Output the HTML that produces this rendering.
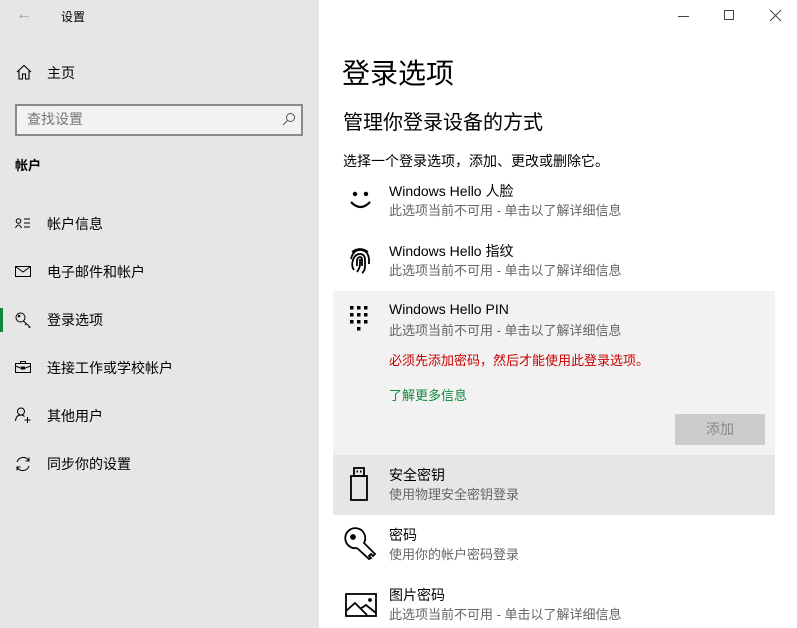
<!DOCTYPE html>
<html><head><meta charset="utf-8"><style>
*{margin:0;padding:0;box-sizing:border-box}
body{width:797px;height:628px;overflow:hidden;background:#fff;font-family:"Liberation Sans","Noto Sans CJK SC",sans-serif;color:#000;position:relative}
.a{position:absolute;white-space:nowrap}
#left{position:absolute;left:0;top:0;width:319px;height:628px;background:#e6e6e6}
.nav{font-size:14px}
.t{font-size:14px;color:#000}
.s{font-size:13px;color:#666}
svg{position:absolute;overflow:visible}
</style></head><body>
<div id="left">
<div class="a" style="left:16px;top:6px;font-size:16px;color:#999">←</div>
<div class="a" style="left:61px;top:8px;font-size:12px">设置</div>
<svg style="left:16px;top:64px" width="16" height="16" viewBox="0 0 16 16" fill="none" stroke="#000" stroke-width="1.1"><path d="M1 8 L8 1.5 L15 8 M3 6.5 V15 H6.5 V10 H9.5 V15 H13 V6.5"/></svg>
<div class="a nav" style="left:47px;top:63px">主页</div>
<div class="a" style="left:15px;top:104px;width:288px;height:32px;border:2px solid #8a8a8a;background:#f2f2f2"></div>
<div class="a" style="left:27px;top:109px;font-size:14px;color:#777">查找设置</div>
<svg style="left:282px;top:112px" width="14" height="14" viewBox="0 0 14 14" fill="none" stroke="#555" stroke-width="1"><circle cx="8.5" cy="5.5" r="4"/><path d="M5.5 8.5 L1 13"/></svg>
<div class="a" style="left:15px;top:155px;font-size:13px;font-weight:bold">帐户</div>
<svg style="left:15px;top:217px" width="16" height="14" viewBox="0 0 16 14" fill="none" stroke="#000" stroke-width="1"><circle cx="3.5" cy="4" r="2.3"/><path d="M0.5 11 Q3.5 5 6.5 11 M9 2H15 M9 6H15 M9 10H15"/></svg>
<div class="a nav" style="left:47px;top:214px">帐户信息</div>
<svg style="left:15px;top:266px" width="16" height="12" viewBox="0 0 16 12" fill="none" stroke="#000" stroke-width="1"><rect x="0.5" y="0.5" width="15" height="10"/><path d="M0.5 0.5 L8 6 L15.5 0.5"/></svg>
<div class="a nav" style="left:47px;top:262px">电子邮件和帐户</div>
<div class="a" style="left:0;top:308px;width:3px;height:24px;background:#10893e"></div>
<svg style="left:15px;top:312px" width="16" height="16" viewBox="0 0 16 16" fill="none" stroke="#000" stroke-width="1"><circle cx="5.5" cy="5.5" r="4.5"/><circle cx="4" cy="4" r="0.8" fill="#000"/><path d="M8.5 9 L15 15 L13.5 16 M11 12 L10 13"/></svg>
<div class="a nav" style="left:47px;top:310px">登录选项</div>
<svg style="left:15px;top:361px" width="16" height="12" viewBox="0 0 16 12" fill="none" stroke="#000" stroke-width="1"><rect x="0.5" y="2.5" width="15" height="9"/><path d="M5.5 2.5V0.5H10.5V2.5 M0.5 5 L8 8 L15.5 5"/><rect x="6.5" y="6" width="3" height="2" fill="#000"/></svg>
<div class="a nav" style="left:47px;top:358px">连接工作或学校帐户</div>
<svg style="left:15px;top:407px" width="16" height="16" viewBox="0 0 16 16" fill="none" stroke="#000" stroke-width="1"><circle cx="6" cy="4.5" r="3.5"/><path d="M0.5 14 Q1 8 6 8 Q8 8 9.5 9.5 M12.5 10V16 M9.5 13H15.5"/></svg>
<div class="a nav" style="left:47px;top:406px">其他用户</div>
<svg style="left:15px;top:456px" width="16" height="16" viewBox="0 0 16 16" fill="none" stroke="#000" stroke-width="1"><path d="M2 6 A6.5 6.5 0 0 1 14 5 M14 1.5V5H10.5 M14 10 A6.5 6.5 0 0 1 2 11 M2 14.5V11H5.5"/></svg>
<div class="a nav" style="left:47px;top:454px">同步你的设置</div>
</div>

<div class="a" style="left:678px;top:16px;width:11px;height:1px;background:#444"></div>
<div class="a" style="left:724px;top:10px;width:10px;height:10px;border:1px solid #444"></div>
<svg style="left:770px;top:10px" width="11" height="11" viewBox="0 0 11 11" stroke="#444" stroke-width="1"><path d="M0 0L11 11M11 0L0 11"/></svg>

<div class="a" style="left:342px;top:52px;font-size:28px">登录选项</div>
<div class="a" style="left:343px;top:106px;font-size:20px">管理你登录设备的方式</div>
<div class="a" style="left:343px;top:151px;font-size:14px">选择一个登录选项，添加、更改或删除它。</div>

<svg style="left:349px;top:190px" width="24" height="20" viewBox="0 0 24 20"><circle cx="6" cy="4" r="2.2"/><circle cx="17" cy="4" r="2.2"/><path d="M2 12 Q11.5 22 21 12" fill="none" stroke="#000" stroke-width="2.2"/></svg>
<div class="a t" style="left:389px;top:181px">Windows Hello 人脸</div>
<div class="a s" style="left:389px;top:200px">此选项当前不可用 - 单击以了解详细信息</div>

<svg style="left:349px;top:246px" width="22" height="28" viewBox="0 0 22 28" fill="none" stroke="#000" stroke-width="1.8"><path d="M3 6 Q11 0 19 6 M2 13 Q4 4 11 4 Q19 4 20 13 V18 M5 24 Q2 20 4 14 Q6 8 11 8 Q16 8 16 14 V20 Q16 25 13 27 M8 26 Q11 22 11 18 V13 M8 20 V14 Q9 11 11 11 Q13 11 13 14 V20"/></svg>
<div class="a t" style="left:389px;top:241px">Windows Hello 指纹</div>
<div class="a s" style="left:389px;top:260px">此选项当前不可用 - 单击以了解详细信息</div>

<div class="a" style="left:333px;top:291px;width:442px;height:164px;background:#f2f2f2"></div>
<svg style="left:350px;top:306px" width="22" height="26" viewBox="0 0 22 26" fill="#000"><rect x="0" y="0" width="3.5" height="3.5"/><rect x="7" y="0" width="3.5" height="3.5"/><rect x="14" y="0" width="3.5" height="3.5"/><rect x="0" y="7" width="3.5" height="3.5"/><rect x="7" y="7" width="3.5" height="3.5"/><rect x="14" y="7" width="3.5" height="3.5"/><rect x="0" y="14" width="3.5" height="3.5"/><rect x="7" y="14" width="3.5" height="3.5"/><rect x="14" y="14" width="3.5" height="3.5"/><rect x="7" y="21" width="3.5" height="3.5"/></svg>
<div class="a t" style="left:389px;top:301px">Windows Hello PIN</div>
<div class="a s" style="left:389px;top:320px">此选项当前不可用 - 单击以了解详细信息</div>
<div class="a" style="left:389px;top:350px;font-size:13px;color:#c00">必须先添加密码，然后才能使用此登录选项。</div>
<div class="a" style="left:389px;top:385px;font-size:13px;color:#10893e">了解更多信息</div>
<div class="a" style="left:675px;top:414px;width:90px;height:31px;background:#ccc;color:#888;font-size:14px;text-align:center;line-height:31px">添加</div>

<div class="a" style="left:333px;top:455px;width:442px;height:60px;background:#e6e6e6"></div>
<svg style="left:350px;top:467px" width="18" height="34" viewBox="0 0 18 34" fill="none" stroke="#000" stroke-width="1.8"><rect x="4" y="1" width="10" height="8"/><rect x="1" y="9" width="16" height="24"/><rect x="6.5" y="3.5" width="1.5" height="2" fill="#000" stroke="none"/><rect x="10" y="3.5" width="1.5" height="2" fill="#000" stroke="none"/></svg>
<div class="a t" style="left:389px;top:465px">安全密钥</div>
<div class="a s" style="left:389px;top:484px">使用物理安全密钥登录</div>

<svg style="left:345px;top:528px" width="34" height="32" viewBox="0 0 34 32" fill="none" stroke="#000" stroke-width="1.8"><path d="M12 20 A10 10 0 1 1 19 15 L30 26 L28 28 L26 26 L24 28 L26 30 L24 31 L12 20"/><circle cx="8" cy="9" r="2" fill="#000"/></svg>
<div class="a t" style="left:389px;top:525px">密码</div>
<div class="a s" style="left:389px;top:544px">使用你的帐户密码登录</div>

<svg style="left:345px;top:593px" width="32" height="24" viewBox="0 0 32 24" fill="none" stroke="#000" stroke-width="1.8"><rect x="1" y="1" width="30" height="22"/><path d="M1 18 L10 10 L22 22 M15 16 L21 12 L31 20"/><circle cx="25" cy="7" r="1" fill="#000"/></svg>
<div class="a t" style="left:389px;top:585px">图片密码</div>
<div class="a s" style="left:389px;top:604px">此选项当前不可用 - 单击以了解详细信息</div>
</body></html>
